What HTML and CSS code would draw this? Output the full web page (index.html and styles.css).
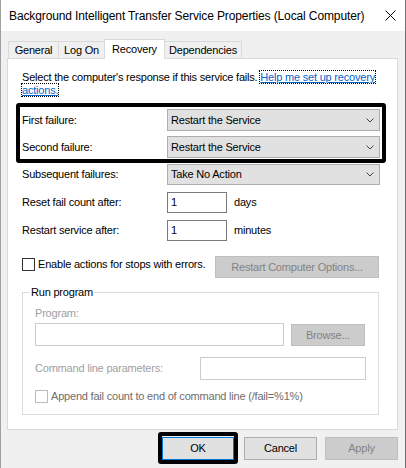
FILE: index.html
```html
<!DOCTYPE html>
<html lang="en">
<head>
<meta charset="utf-8">
<title>Background Intelligent Transfer Service Properties</title>
<link rel="stylesheet" href="styles.css">
</head>
<body>
<div class="window">
  <div class="titlebar">
    <span class="title">Background Intelligent Transfer Service Properties (Local Computer)</span>
    <svg class="close" width="11" height="11" viewBox="0 0 11 11"><path d="M0.5 0.5 L10.5 10.5 M10.5 0.5 L0.5 10.5" stroke="#000" stroke-width="1" fill="none"/></svg>
  </div>
  <div class="main">
    <div class="tabs">
      <div class="tab tab-general">General</div>
      <div class="tab tab-logon">Log On</div>
      <div class="tab tab-recovery active">Recovery</div>
      <div class="tab tab-deps">Dependencies</div>
    </div>
    <div class="panel">
      <div class="intro">
        <div class="intro-line"><span>Select the computer's response if this service fails.</span> <span class="link">Help me set up recovery</span></div>
        <div class="intro-line"><span class="link">actions.</span></div>
      </div>

      <div class="highlight">
        <div class="row">
          <span class="label">First failure:</span>
          <div class="combo"><span>Restart the Service</span><svg class="chev" width="8" height="5" viewBox="0 0 8 5"><path d="M0.5 0.5 L4 4 L7.5 0.5" stroke="#444" stroke-width="1" fill="none"/></svg></div>
        </div>
        <div class="row">
          <span class="label">Second failure:</span>
          <div class="combo"><span>Restart the Service</span><svg class="chev" width="8" height="5" viewBox="0 0 8 5"><path d="M0.5 0.5 L4 4 L7.5 0.5" stroke="#444" stroke-width="1" fill="none"/></svg></div>
        </div>
      </div>

      <div class="row row-sub">
        <span class="label">Subsequent failures:</span>
        <div class="combo combo-sub"><span>Take No Action</span><svg class="chev" width="8" height="5" viewBox="0 0 8 5"><path d="M0.5 0.5 L4 4 L7.5 0.5" stroke="#444" stroke-width="1" fill="none"/></svg></div>
      </div>

      <div class="row row-field">
        <span class="label">Reset fail count after:</span>
        <div class="field"><div class="textbox">1</div><span class="unit">days</span></div>
      </div>

      <div class="row row-field">
        <span class="label">Restart service after:</span>
        <div class="field"><div class="textbox">1</div><span class="unit">minutes</span></div>
      </div>

      <div class="checkrow">
        <div class="checkbox"></div>
        <span class="check-label">Enable actions for stops with errors.</span>
        <div class="btn disabled btn-restart">Restart Computer Options...</div>
      </div>

      <fieldset class="group">
        <legend>Run program</legend>
        <div class="glabel">Program:</div>
        <div class="prog-row">
          <div class="dtextbox prog-box"></div>
          <div class="btn disabled btn-browse">Browse...</div>
        </div>
        <div class="cmd-row">
          <span class="glabel cmd-label">Command line parameters:</span>
          <div class="dtextbox cmd-box"></div>
        </div>
        <div class="append-row">
          <div class="checkbox disabled-check"></div>
          <span class="append-label">Append fail count to end of command line (/fail=%1%)</span>
        </div>
      </fieldset>
    </div>

    <div class="buttons">
      <div class="focus-ring"><div class="btn btn-ok">OK</div></div>
      <div class="btn btn-cancel">Cancel</div>
      <div class="btn disabled btn-apply">Apply</div>
    </div>
  </div>
</div>
</body>
</html>
```
FILE: styles.css
```css
* { box-sizing: border-box; }
html, body { margin: 0; padding: 0; }
body {
  width: 406px;
  height: 468px;
  overflow: hidden;
  background: #f0f0f0;
  font-family: "Liberation Sans", Arial, sans-serif;
  font-size: 11px;
  letter-spacing: -0.2px;
  color: #000;
}
.window {
  width: 406px;
  height: 468px;
  border-left: 1px solid #a0a0a0;
  border-right: 1px solid #707070;
  background: #f0f0f0;
}
.titlebar {
  height: 31px;
  background: #fff;
  display: flex;
  align-items: center;
  padding-left: 8px;
  padding-right: 9px;
}
.title {
  flex: 1;
  font-size: 12px;
  letter-spacing: -0.12px;
  white-space: nowrap;
}
.close { display: block; }
.main { padding: 0 7px 0 6px; }

/* tabs */
.tabs {
  display: flex;
  align-items: flex-end;
  height: 19px;
  margin-top: 8px;
  padding-left: 1px;
}
.tab {
  height: 17px;
  border: 1px solid #d9d9d9;
  border-bottom: none;
  background: #f0f0f0;
  display: flex;
  align-items: center;
  justify-content: center;
  margin-left: -1px;
  line-height: 13px;
}
.tab-general { margin-left: 0; width: 51px; }
.tab-logon { width: 47px; }
.tab-recovery { width: 61px; }
.tab-deps { width: 78px; }
.tab.active {
  height: 20px;
  background: #fff;
  margin-bottom: -1px;
  position: relative;
  z-index: 1;
}

/* panel */
.panel {
  height: 372px;
  background: #fff;
  border: 1px solid #d9d9d9;
  padding: 12px 17px 0 14px;
}
.intro { line-height: 13px; }
.intro-line { white-space: nowrap; }
.link {
  color: #0066cc;
  text-decoration: underline;
  outline: 1px dotted #000;
}
.highlight {
  margin: 6px -6px 0 -6px;
  border: 4px solid #000;
  border-radius: 3px;
  padding: 2px 2px 1px;
  display: grid;
  row-gap: 5px;
}
.row {
  display: grid;
  grid-template-columns: 145px 213px;
  align-items: center;
  line-height: 13px;
}
.combo {
  height: 22px;
  border: 1px solid #adadad;
  background: #e1e1e1;
  display: flex;
  align-items: center;
  justify-content: space-between;
  padding: 0 5px 0 3px;
}
.chev { display: block; }
.row-sub { margin-top: 1px; }
.combo-sub { height: 21px; }
.row-field { margin-top: 7px; }
.field { display: flex; align-items: center; }
.textbox {
  width: 60px;
  height: 21px;
  border: 1px solid #7a7a7a;
  background: #fff;
  padding-left: 3px;
  display: flex;
  align-items: center;
}
.unit { margin-left: 7px; }

.checkrow {
  display: flex;
  align-items: flex-start;
  margin-top: 15px;
  padding-right: 1px;
  line-height: 13px;
}
.checkbox {
  width: 13px;
  height: 13px;
  border: 1px solid #333;
  background: #fff;
  margin-top: 2px;
  flex: none;
}
.check-label { margin: 2px 0 0 3px; flex: 1; }
.btn {
  height: 22px;
  border: 1px solid #adadad;
  background: #e1e1e1;
  display: flex;
  align-items: center;
  justify-content: center;
  line-height: 13px;
  flex: none;
}
.btn.disabled {
  background: #cccccc;
  border-color: #bfbfbf;
  color: #838383;
}
.btn-restart { width: 164px; }

/* group box */
.group {
  margin: 8px 1px 0 0;
  padding: 8px 12px 11px;
  border: 1px solid #dcdcdc;
  min-width: 0;
  line-height: 13px;
}
.group legend {
  padding: 0 1px;
  margin-left: -5px;
  line-height: 13px;
}
.glabel { color: #a0a0a0; }
.prog-row { display: flex; align-items: flex-start; margin-top: 3px; }
.dtextbox {
  height: 23px;
  border: 1px solid #cccccc;
  background: #fff;
}
.prog-box { width: 249px; }
.btn-browse { width: 74px; margin: 1px 0 0 7px; }
.cmd-row { display: flex; align-items: center; margin-top: 11px; }
.cmd-label { width: 165px; }
.cmd-box { width: 166px; }
.append-row { display: flex; align-items: center; margin-top: 10px; }
.disabled-check { margin-top: 0; border-color: #bcbcbc; }
.append-label { margin-left: 3px; color: #6d6d6d; }

/* dialog buttons */
.buttons {
  display: flex;
  justify-content: flex-end;
  align-items: flex-start;
  margin-top: 2px;
}
.focus-ring {
  border: 4px solid #000;
  border-radius: 3px;
  padding-top: 1px;
}
.btn-ok {
  width: 72px;
  height: 23px;
  border: 1px solid #0078d7;
}
.btn-cancel { width: 73px; height: 23px; margin: 5px 0 0 6px; }
.btn-apply { width: 73px; height: 23px; margin: 5px 0 0 8px; }
```
